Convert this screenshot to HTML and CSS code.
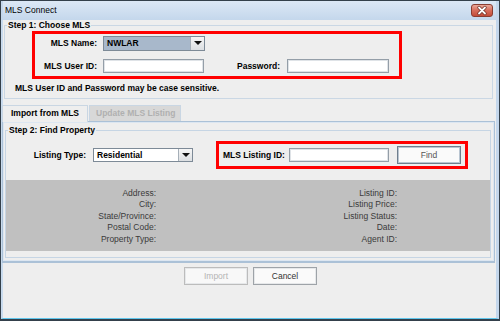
FILE: index.html
```html
<!DOCTYPE html>
<html lang="en">
<head>
<meta charset="UTF-8" />
<meta name="viewport" content="width=device-width, initial-scale=1" />
<title>MLS Connect</title>
<link rel="stylesheet" href="styles.css">
</head>
<body>
<div class="window">
  <div class="titlebar">
    <span class="title">MLS Connect</span>
    <button type="button" class="close-btn" aria-label="Close">
      <svg width="20" height="11" viewBox="0 0 20 11">
        <path d="M7 2.5 L13 8.5 M13 2.5 L7 8.5" stroke="#6b2a20" stroke-width="3.2" stroke-linecap="round" />
        <path d="M7 2.5 L13 8.5 M13 2.5 L7 8.5" stroke="#fff" stroke-width="1.8" stroke-linecap="round" />
      </svg>
    </button>
  </div>

  <div class="client">
    <fieldset class="group group-mls">
      <legend>Step 1: Choose MLS</legend>
      <div class="highlight login-box">
        <div class="row">
          <label class="label">MLS Name:</label>
          <div class="combo combo-selected">
            <span class="combo-value">NWLAR</span>
            <span class="combo-arrow"></span>
          </div>
        </div>
        <div class="row">
          <label class="label" for="userId">MLS User ID:</label>
          <input type="text" id="userId" class="field" />
          <label class="label pw-label" for="password">Password:</label>
          <input type="password" id="password" class="field pw-field" />
        </div>
      </div>
      <p class="note">MLS User ID and Password may be case sensitive.</p>
    </fieldset>

    <div class="tabs">
      <div class="tab active">Import from MLS</div>
      <div class="tab disabled">Update MLS Listing</div>
    </div>

    <div class="tab-panel">
      <fieldset class="group group-find">
        <legend>Step 2: Find Property</legend>
        <div class="find-row">
          <label class="label type-label">Listing Type:</label>
          <div class="combo combo-type">
            <span class="combo-value">Residential</span>
            <span class="combo-arrow"></span>
          </div>
          <div class="highlight listing-box">
            <label class="label listing-label" for="listingId">MLS Listing ID:</label>
            <input type="text" id="listingId" class="field listing-field" />
            <button type="button" class="btn btn-default">Find</button>
          </div>
        </div>

        <div class="details">
          <span class="key">Address:</span><span class="val"></span>
          <span class="key">Listing ID:</span><span class="val"></span>
          <span class="key">City:</span><span class="val"></span>
          <span class="key">Listing Price:</span><span class="val"></span>
          <span class="key">State/Province:</span><span class="val"></span>
          <span class="key">Listing Status:</span><span class="val"></span>
          <span class="key">Postal Code:</span><span class="val"></span>
          <span class="key">Date:</span><span class="val"></span>
          <span class="key">Property Type:</span><span class="val"></span>
          <span class="key">Agent ID:</span><span class="val"></span>
        </div>
      </fieldset>
    </div>

    <div class="actions">
      <button type="button" class="btn" disabled>Import</button>
      <button type="button" class="btn">Cancel</button>
    </div>
  </div>
</div>
</body>
</html>
```

FILE: styles.css
```css
* {
  box-sizing: border-box;
}
body {
  margin: 0;
  font-family: "Liberation Sans", Arial, sans-serif;
  font-size: 8.5px;
  color: #000;
  background: #fff;
}
.window {
  width: 500px;
  height: 321px;
  border: 1px solid #34404b;
  border-bottom-width: 2px;
  display: flex;
  flex-direction: column;
  background: #eeeeee;
}
.titlebar {
  height: 19px;
  display: flex;
  align-items: center;
  justify-content: space-between;
  padding: 0 3px 0 4px;
  background: linear-gradient(#dce8f5, #c4d7ec);
  border-left: 2px solid #c4d7ec;
  border-right: 3px solid #c4d7ec;
}
.title {
  line-height: 19px;
  margin-left: -2px;
}
.close-btn {
  width: 22px;
  height: 13px;
  padding: 0;
  border: 1px solid #8a3d31;
  border-radius: 3px;
  background: linear-gradient(#eaa899, #d66d5b 50%, #c44c38);
  display: flex;
  align-items: center;
  justify-content: center;
}
.client {
  flex: 1;
  display: flex;
  flex-direction: column;
  border-left: 2px solid #c9dbee;
  border-right: 3px solid #c4d7ec;
  border-bottom: 1px solid #5fc6ec;
}

/* titled group boxes */
.group {
  margin: 0;
  padding: 0;
  min-width: 0;
  border: 1px solid #cad7e4;
}
.group legend {
  margin-left: 2px;
  padding: 0 1px;
  font-weight: bold;
  line-height: 11px;
}
.group-mls {
  margin: 0 3px 0 1px;
  padding-bottom: 4px;
}
.highlight {
  border: 3px solid #ff0000;
}
.login-box {
  width: 370px;
  height: 48px;
  margin-left: 27px;
  padding-top: 2px;
  display: flex;
  flex-direction: column;
  gap: 9px;
}
.row {
  display: flex;
  align-items: center;
  height: 14px;
}
.label {
  font-weight: bold;
  white-space: nowrap;
}
.login-box .label {
  width: 62px;
  margin-right: 6px;
  text-align: right;
}
.login-box .pw-label {
  width: 44px;
  margin-left: 32px;
  margin-right: 7px;
}
.note {
  margin: 4px 0 0 10px;
  font-weight: bold;
  line-height: 11px;
}

/* form controls */
.field {
  width: 101px;
  height: 14px;
  padding: 0 2px;
  border: 1px solid #949ea8;
  box-shadow: inset 0 0 0 1px #dfe3e7;
  background: #fff;
  font: inherit;
}
.pw-field {
  width: 102px;
}
.combo {
  width: 102px;
  height: 15px;
  border: 1px solid #7d8a97;
  background: #fff;
  display: flex;
  align-items: center;
}
.combo-selected {
  background: #a8b8cb;
}
.combo-value {
  flex: 1;
  padding-left: 3px;
  font-weight: bold;
}
.combo-arrow {
  width: 14px;
  height: 100%;
  border-left: 1px solid #a6afb8;
  background: linear-gradient(#f6f6f6, #dcdfe2);
  display: flex;
  align-items: center;
  justify-content: center;
}
.combo-arrow::after {
  content: "";
  border-left: 4px solid transparent;
  border-right: 4px solid transparent;
  border-top: 4px solid #111;
}
.btn {
  width: 64px;
  height: 18px;
  padding: 0;
  border: 1px solid #9ea3a8;
  box-shadow: inset 0 0 0 1px #e6e8ea;
  background: #fafafa;
  color: #333;
  font: inherit;
}
.btn:disabled {
  color: #b4b4b4;
  border-color: #bcbcbc;
  background: #f8f8f8;
}
.btn-default {
  border-color: #6f7e8d;
  box-shadow: inset 0 0 0 1px #b9c5d1;
  color: #555;
}

/* tabs */
.tabs {
  display: flex;
  margin: 6px 0 0 -1px;
  height: 16px;
}
.tab {
  padding: 0 8px;
  line-height: 15px;
  font-weight: bold;
  white-space: nowrap;
  border: 1px solid #c9d6e3;
  border-bottom: none;
}
.tab.active {
  width: 86px;
  background: #eeeeee;
  position: relative;
  z-index: 1;
  margin-bottom: -1px;
  height: 17px;
}
.tab.disabled {
  width: 92px;
  margin-left: 1px;
  padding: 0 0 0 6px;
  background: #d8d8d8;
  color: #b0b0b0;
}
.tab-panel {
  margin: 0 1px 0 -1px;
  padding: 3px 3px 3px 2px;
  border: 1px solid #abc1d7;
  border-bottom-width: 2px;
  box-shadow: inset 0 0 0 1px #dce6f1;
}
.group-find {
  padding-bottom: 6px;
  border-color: #c6d5e4;
}
.find-row {
  display: flex;
  align-items: center;
  height: 28px;
  margin-top: 5px;
}
.type-label {
  width: 80px;
  text-align: right;
  margin-right: 7px;
}
.combo-type {
  width: 100px;
  height: 14px;
}
.listing-box {
  width: 252px;
  height: 28px;
  margin-left: 23px;
  padding-left: 4px;
  display: flex;
  align-items: center;
}
.listing-label {
  width: 60px;
}
.listing-field {
  width: 100px;
  margin-left: 6px;
}
.listing-box .btn {
  margin-left: 8px;
}

/* property details */
.details {
  margin-top: 11px;
  height: 71px;
  padding-top: 8px;
  background: #c0c0c0;
  display: grid;
  grid-template-columns: 150px 91px 150px 1fr;
  grid-auto-rows: 11.4px;
  line-height: 11.4px;
  color: #3a3a3a;
}
.details .key {
  text-align: right;
}

.actions {
  display: flex;
  justify-content: center;
  gap: 5px;
  margin-top: 4px;
  padding-left: 2px;
}
```
